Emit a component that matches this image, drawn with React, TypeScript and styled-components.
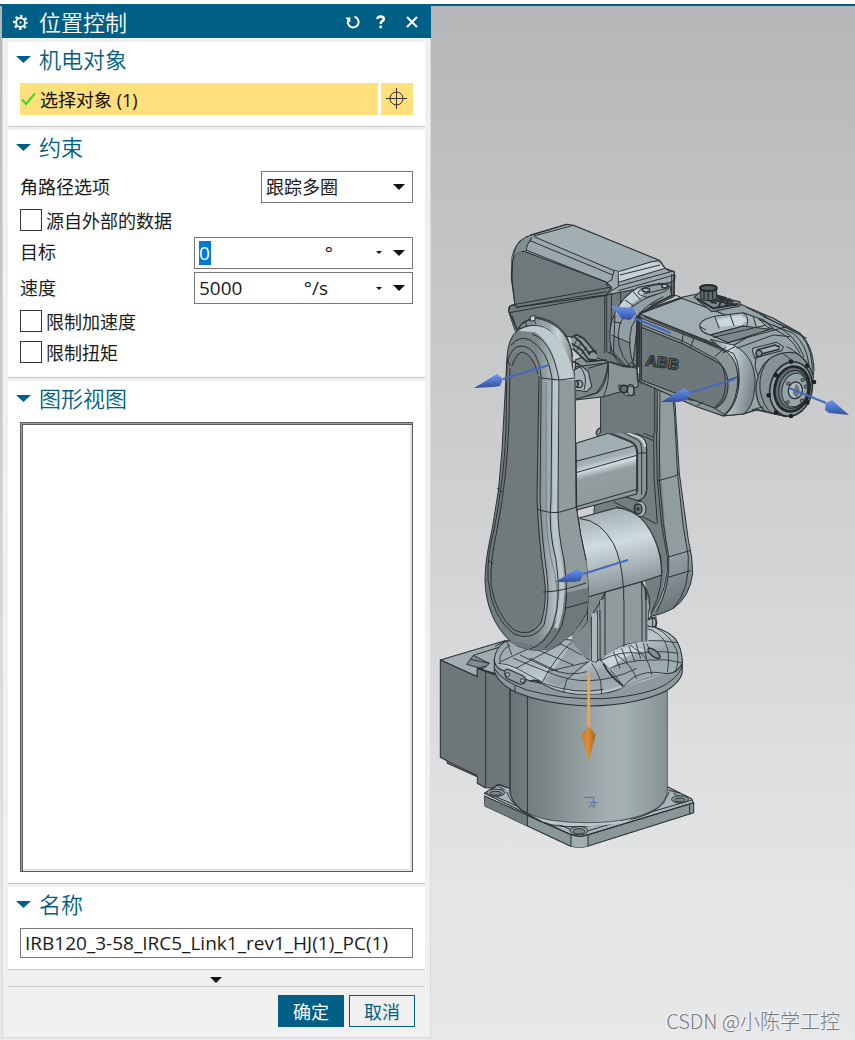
import React from "react";
import styled, { createGlobalStyle } from "styled-components";

const teal = "#005f87";
const ink = "#2b3032";
const uiFont = `"Open Sans", "Noto Sans CJK SC", sans-serif`;

const GlobalStyle = createGlobalStyle`
  * { box-sizing: border-box; }
  body { margin: 0; background: #e7e8ea; font-family: ${uiFont}; color: #1a1a1a; }
  button, input, select { font-family: inherit; color: inherit; border-radius: 0; }
`;

const Page = styled.div`
  min-height: 100vh;
  display: flex;
  flex-direction: column;
  background: #fff;
  padding-top: 4px;
`;

const Workspace = styled.div`
  flex: 1;
  display: flex;
  align-items: stretch;
  border-top: 2px solid ${teal};
  background: linear-gradient(#b5b6b8, #c1c2c4 20%, #cccdcf 42%, #dadbdd 67%, #e3e4e6 84%, #e7e8ea);
`;

const Dialog = styled.form`
  flex: none;
  width: 429px;
  margin: 0 0 2px 2px;
  display: flex;
  flex-direction: column;
  background: #f0f0f0;
  box-shadow: inset 0 0 0 1px #dadada;
`;

const TitleBar = styled.header`
  height: 32px;
  display: flex;
  align-items: center;
  gap: 11px;
  padding: 0 11px;
  background: ${teal};
  color: #fff;
`;

const Title = styled.h1`
  flex: 1;
  margin: 0;
  font-size: 22px;
  line-height: 32px;
  font-weight: 350;
`;

const TitleButton = styled.button`
  width: 16px;
  height: 16px;
  padding: 0;
  border: 0;
  background: none;
  color: #fff;
  svg { display: block; }
`;

const TitleActions = styled.div`
  display: flex;
  gap: 14px;
`;

const Sections = styled.div`
  display: flex;
  flex-direction: column;
  gap: 3px;
  padding: 4px 6px 0;
`;

const Panel = styled.section`
  background: #fff;
  border-bottom: 1px solid #c6c6c6;
  padding: 0 12px 11px;
`;

const PanelTitle = styled.h2`
  display: flex;
  align-items: center;
  gap: 8px;
  margin: 0 -4px;
  height: 34px;
  font-size: 22px;
  line-height: 34px;
  font-weight: 350;
  color: ${teal};
`;

const SelectRow = styled.div`
  display: flex;
  gap: 3px;
  height: 32px;
  margin-top: 7px;
`;

const SelectObject = styled.button`
  flex: 1;
  display: flex;
  align-items: center;
  gap: 4px;
  padding: 0 1px;
  border: 0;
  background: #ffe07a;
  font-size: 18px;
  color: #111;
`;

const PickButton = styled.button`
  width: 32px;
  padding: 0;
  display: grid;
  place-items: center;
  border: 0;
  background: #ffe07a;
`;

const Constraints = styled.div`
  padding-top: 2px;
`;

const Row = styled.div<{ $h: number }>`
  display: flex;
  align-items: center;
  justify-content: space-between;
  height: ${(p) => p.$h}px;
  font-size: 18px;
`;

const RowLabel = styled.label`
  padding-bottom: 3px;
`;

const CheckLabel = styled.label<{ $h: number }>`
  display: flex;
  align-items: center;
  gap: 4px;
  height: ${(p) => p.$h}px;
  font-size: 18px;
`;

const Check = styled.input`
  appearance: none;
  width: 22px;
  height: 22px;
  margin: 0;
  border: 1px solid #333;
  background: #fff;
`;

const Field = styled.div<{ $w: number }>`
  display: flex;
  align-items: center;
  width: ${(p) => p.$w}px;
  height: 32px;
  padding: 0 7px 0 4px;
  border: 1px solid #767676;
  background: #fff;
`;

const Picker = styled.select`
  appearance: none;
  flex: 1;
  min-width: 0;
  padding: 0;
  border: 0;
  background: none;
  font-size: 18px;
  outline: none;
`;

const NumberInput = styled.input<{ $w: number; $selected?: boolean }>`
  width: ${(p) => p.$w}px;
  height: 24px;
  padding: 0;
  border: 0;
  outline: 0;
  font-size: 19px;
  line-height: 24px;
  background: ${(p) => (p.$selected ? "#0078d7" : "none")};
  color: ${(p) => (p.$selected ? "#fff" : "inherit")};
`;

const Unit = styled.span<{ $gap: number }>`
  flex: 1;
  padding-right: ${(p) => p.$gap}px;
  text-align: right;
  font-size: 19px;
`;

const Arrows = styled.span`
  display: flex;
  align-items: center;
  gap: 11px;
`;

const GraphView = styled.div`
  height: 450px;
  margin-top: 7px;
  border: 1px solid #5c5c5c;
  box-shadow: inset 1px 1px #a0a0a0, inset 2px 2px #5c5c5c, inset -2px -2px #e3e3e3;
`;

const NameInput = styled.input`
  display: block;
  width: 100%;
  height: 30px;
  margin-top: 7px;
  padding: 0 4px;
  border: 1px solid #767676;
  font-size: 19px;
`;

const MoreButton = styled.button`
  display: grid;
  place-items: center;
  height: 17px;
  margin: 0 6px;
  padding: 3px 2px 0 0;
  border: 0;
  border-bottom: 1px solid #cfcfcf;
  background: none;
`;

const Footer = styled.footer`
  display: flex;
  justify-content: flex-end;
  gap: 5px;
  padding: 8px 16px 10px;
`;

const ActionButton = styled.button<{ $primary?: boolean }>`
  width: 66px;
  height: 32px;
  padding: 0;
  border: 1px solid ${teal};
  background: ${(p) => (p.$primary ? teal : "#f0f0f0")};
  color: ${(p) => (p.$primary ? "#fff" : teal)};
  font-size: 18px;
`;

const Viewport = styled.main`
  flex: 1;
  min-width: 0;
  display: flex;
  flex-direction: column;
  justify-content: space-between;
  padding-top: 194px;
`;

const Drawing = styled.svg`
  display: block;
  width: 100%;
  max-width: 640px;
`;

const Watermark = styled.p`
  margin: 0;
  padding: 0 15px 5px;
  text-align: right;
  font-family: "Noto Sans CJK SC", sans-serif;
  font-size: 20px;
  line-height: 28px;
  font-weight: 300;
  color: #77787a;
  text-shadow: -1px -1px #f6f6f6;
`;

const Triangle = ({ w = 12, h = 6, color = "#111" }: { w?: number; h?: number; color?: string }) => (
  <svg width={w} height={h} viewBox="0 0 12 6" preserveAspectRatio="none" aria-hidden="true">
    <path d="M0 0H12L6 6Z" fill={color} />
  </svg>
);

const SectionTitle = ({ children }: { children: React.ReactNode }) => (
  <PanelTitle>
    <Triangle w={15} h={7} color={teal} />
    {children}
  </PanelTitle>
);

const GearIcon = () => (
  <svg width="15" height="15" viewBox="0 0 16 16" fill="none" stroke="#fff" aria-hidden="true">
    <circle cx="8" cy="8" r="4.8" strokeWidth="2" />
    <circle cx="8" cy="8" r="6.8" strokeWidth="2.2" strokeDasharray="2.6 2.74" strokeDashoffset="1.3" />
    <circle cx="8" cy="8" r="1.1" fill="#fff" stroke="none" />
  </svg>
);

const Line = ({ d, w = 3 }: { d: string; w?: number }) => (
  <path d={d} fill="none" stroke={ink} strokeWidth={w} strokeLinejoin="round" />
);
const Face = ({ d, f, w = 3.2 }: { d: string; f: string; w?: number }) => (
  <path d={d} fill={f} stroke={ink} strokeWidth={w} strokeLinejoin="round" />
);

const Gradients = () => (
  <defs>
    <linearGradient id="drum">
      <stop offset="0" stopColor="#687376" />
      <stop offset=".25" stopColor="#7d898b" />
      <stop offset=".6" stopColor="#a1adaf" />
      <stop offset=".72" stopColor="#a5b2b4" />
      <stop offset="1" stopColor="#859193" />
    </linearGradient>
    <linearGradient id="dome" x2="1" y2="1">
      <stop offset="0" stopColor="#8d9a9d" />
      <stop offset=".35" stopColor="#a9b6b9" />
      <stop offset=".5" stopColor="#bdcacd" />
      <stop offset=".62" stopColor="#98a5a8" />
      <stop offset="1" stopColor="#aebbbe" />
    </linearGradient>
    <linearGradient id="shoulder" x1=".3" y1="0" x2=".5" y2="1">
      <stop offset="0" stopColor="#9eabad" />
      <stop offset=".4" stopColor="#cfdcdf" />
      <stop offset=".7" stopColor="#a5b1b4" />
      <stop offset="1" stopColor="#7b8789" />
    </linearGradient>
    <linearGradient id="tube" x1=".4" y1="0" x2=".6" y2="1">
      <stop offset="0" stopColor="#a2afb2" />
      <stop offset=".33" stopColor="#a2afb2" />
      <stop offset=".42" stopColor="#d0dde0" />
      <stop offset=".52" stopColor="#929ea0" />
      <stop offset="1" stopColor="#8b9799" />
    </linearGradient>
    <linearGradient id="legEdge">
      <stop offset="0" stopColor="#6f7a7c" />
      <stop offset=".5" stopColor="#7b8789" />
      <stop offset=".7" stopColor="#b6c4c7" />
      <stop offset=".8" stopColor="#8f9b9d" />
      <stop offset="1" stopColor="#8f9b9d" />
    </linearGradient>
    <linearGradient id="bulge">
      <stop offset="0" stopColor="#788486" />
      <stop offset=".55" stopColor="#9ba8aa" />
      <stop offset=".72" stopColor="#c9d7da" />
      <stop offset="1" stopColor="#7c888a" />
    </linearGradient>
    <linearGradient id="legFoot" x1="0" y1="0" x2=".3" y2="1">
      <stop offset="0" stopColor="#a0adaf" />
      <stop offset="1" stopColor="#69747a" />
    </linearGradient>
    <linearGradient id="nose" x1="0" y1=".2" x2="1" y2=".5">
      <stop offset="0" stopColor="#8b979a" />
      <stop offset=".4" stopColor="#cbd9dc" />
      <stop offset="1" stopColor="#79858a" />
    </linearGradient>
    <linearGradient id="cone" x1="0" y1="0" x2="0" y2="1">
      <stop offset="0" stopColor="#6f93e8" />
      <stop offset=".5" stopColor="#4f74cc" />
      <stop offset="1" stopColor="#33509a" />
    </linearGradient>
    <linearGradient id="orange">
      <stop offset="0" stopColor="#c47a2e" />
      <stop offset=".45" stopColor="#e08e35" />
      <stop offset="1" stopColor="#a4611e" />
    </linearGradient>
  </defs>
);

/* Rear link, cross tube, shoulder drum and pedestal column */
const RearLink = () => (
  <g transform="translate(470 400) scale(.333333)">
    <path d="M393-60V95L372 330 375 345 500 380 540 648 600 630 615 400 580 100 575-60Z" fill="#737e80" />
    <path d="M550 245V360L440 305 500 302 530 280V120L393 46V-60H560Z" fill="#737e80" />
    <Line d="M393-60V82M372 345V330L378 300" />
    <path d="M550-100L612-40 628 220 655 420Q668 470 668 520 660 590 610 625 580 642 540 650 595 560 590 450 562 240Z" fill="#909c9e" />
    <path d="M592 470L662 450Q668 480 668 520 660 590 610 625 580 642 540 650 585 600 592 530Z" fill="url(#legFoot)" />
    <Line d="M397 46L550 112M397 54L550 122M550-100L552 230 562 370M556-100L562 240 574 370 592 470 Q600 560 542 645M570-70L568 240 580 370 596 470Q602 560 560 635" />
    <Line d="M604-60L614 50 623 225 640 380 655 470Q660 570 610 625M612-40L628 220 655 420Q668 470 668 520 660 590 610 625 580 642 540 650M562 243L615 228 628 220M592 472L662 451M594 532L662 512M430 305L560 372M440 320Q540 350 572 470 585 560 545 635" />
    <Face d="M378 100Q380 78 420 78L505 108Q532 118 530 150V270Q528 295 505 302L470 292 400 130Z" f="#8a9698" />
    <path d="M418 80L505 110Q522 118 526 140" fill="none" stroke="#cbd8db" strokeWidth="7" />
    <Line d="M420 76L510 108Q532 118 530 150V270Q528 295 505 302M385 103Q400 88 420 98L480 122Q504 132 503 160V275M405 88Q425 80 440 88L500 118Q515 125 515 150V285M503 160L530 158" />
    <Face d="M318 130L415 100 480 125Q498 132 500 155V282L320 330Z" f="url(#tube)" />
    <Line d="M318 184L498 136M318 218L500 166M320 320L500 268" />
    <ellipse cx="510" cy="327" rx="18" ry="23" fill="#a5b2b5" stroke={ink} strokeWidth="3" />
    <ellipse cx="505" cy="327" rx="11" ry="15" fill="#6b7678" stroke={ink} strokeWidth="4" />
    <circle cx="504" cy="327" r="5" fill={ink} />
    <path d="M350 590L410 575 400 700 310 730 300 690Z" fill="#7d898b" />
    <Face d="M325 355L440 323Q500 330 530 375 575 440 575 525L515 545 350 592Z" f="url(#shoulder)" />
    <Line d="M330 356Q390 360 430 430 455 480 460 560M353 592L352 670" />
    <Face d="M385 780V640L405 577 515 545 530 580V780Z" f="#8f9b9d" />
    <path d="M405 577L360 670 310 715 360 780H385V640Z" fill="#7b8789" />
    <path d="M366 670Q385 640 392 600V790H366Z" fill="#b0bdbf" />
    <Line d="M405 577Q380 630 330 695M390 600V790M382 650V790M360 670V780M405 577V780M461 560V790M515 545V755M526 565V760M515 545Q550 590 535 640V680" />
    <circle cx="545" cy="668" r="15" fill="#a8b5b8" stroke={ink} strokeWidth="4" />
    <Line d="M535 660L558 650V685L538 690M548 655V682" />
  </g>
);

const Base = () => (
  <g transform="translate(430 600) scale(.333333)">
    <Face d="M31 180L225 122 280 130 260 240 170 213 142 205V230Z" f="#a1aeb1" />
    <Face d="M31 180L142 230V205L250 240V590L195 565 165 563 142 550V530L52 490V483L31 472Z" f="#6d777a" />
    <path d="M110 193L130 166 178 190 160 207Z" fill="#7f8b8d" />
    <Line d="M167 213V562M52 484L142 526M110 193L130 166 210 141M110 193L160 207 178 190 122 178M130 166L178 190M142 205L195 225M142 205L170 198M225 122L195 140" />
    <Face d="M163 580L205 555 240 565 712 560 785 596 791 612 475 704 450 710 425 706Z" f="#a9b6b9" />
    <Face d="M163 588L420 703Q450 715 475 704L791 608V638L475 738Q450 745 420 738L165 618Z" f="#8a9698" />
    <path d="M163 588L292 646V678L165 618Z" fill="#707b7d" />
    <path d="M423 706Q450 714 474 706V738Q450 745 423 738Z" fill="#a1aeb0" />
    <Line d="M163 588L420 703Q450 715 475 704L791 608M292 646V678M423 705V738M474 705V738M779 614V642M170 578L425 690 475 692 785 600" />
    {[[197, 578, 27, 11], [447, 692, 27, 13], [750, 598, 25, 11]].map(([x, y, rx, ry]) => (
      <g key={x}>
        <ellipse cx={x} cy={y} rx={rx} ry={ry} fill="#93a0a3" stroke={ink} strokeWidth="3" />
        <ellipse cx={x} cy={y + 2} rx={rx - 9} ry={ry - 5} fill="#7b8789" stroke={ink} strokeWidth="3" />
      </g>
    ))}
    <Line d="M180 570L205 552 232 563M205 560L225 570M715 570L750 580M730 580L745 588M230 575Q240 610 290 640 350 690 470 678 650 665 700 610L718 575" />
    <path d="M292 640Q340 667 470 670 560 668 610 655L580 668Q440 690 340 665Z" fill="#bac8cb" />
    <Face d="M240 240V580Q250 620 292 640 350 668 470 668 610 668 680 625 712 600 712 570V240Z" f="url(#drum)" w={2} />
    <Line d="M292 280V640M240 270V580Q250 620 300 645" />
    <Face d="M193 175V215Q205 250 255 275 340 312 480 318 620 315 710 272 757 240 757 212V180Z" f="#8d999c" />
    <Line d="M193 205Q210 240 290 270 400 300 520 296 660 285 712 250 757 220 757 190M255 258V275" />
    <Face d="M193 180Q195 145 225 125L290 110 425 120Q450 150 470 175L490 185 512 178Q545 145 600 130L650 120 650 78Q700 82 735 115 757 145 757 190 740 225 705 220 640 235 580 262 540 283 480 283 390 285 335 250L300 243 235 215Q195 210 193 180Z" f="url(#dome)" />
    <path d="M425 125Q400 180 330 250L390 255Q450 215 478 185Z" fill="#7e8a8d" opacity=".5" />
    <path d="M515 185Q560 145 610 140L650 150Q570 165 540 215Z" fill="#d5e2e5" opacity=".7" />
    <path d="M210 190Q300 220 350 250 430 290 520 276L580 260 705 218" fill="none" stroke="#d0dde0" strokeWidth="8" opacity=".5" />
    <Line d="M205 190Q230 190 260 205L335 245M212 185L330 130M258 205L395 130M335 250Q370 180 425 125M352 215L478 185M210 190Q205 155 240 135M230 120L245 165M250 175L350 215Q420 245 480 242 550 240 620 205M270 165L355 205Q420 232 470 215M340 250Q440 285 520 268M400 279L410 240Q440 210 475 185M515 283L512 242Q500 210 485 190M578 260Q560 225 510 180M620 236Q605 195 560 165M665 225Q660 190 640 165L600 135M512 182Q570 150 630 160 690 150 745 160M540 205Q590 180 660 180 710 175 755 188M580 262Q620 205 705 220M650 85Q685 95 705 125 722 160 712 215M655 122Q700 120 740 128M680 85Q720 105 740 150 750 185 735 217M650 130L668 170 688 172M550 155L570 205M575 145L592 190M596 137L615 185M618 130L632 175M640 128L650 175M300 175L385 215M325 150L430 195M370 120L455 165" w={2.6} />
    <Line d="M520 190Q535 225 580 258M335 250Q320 237 300 243" w={5} />
    <Face d="M225 212Q228 205 240 210L280 228Q290 235 286 245 280 255 268 252L230 235Q222 225 225 212Z" f="#909da0" />
    <circle cx="233" cy="224" r="6" fill="#aebbbe" stroke={ink} strokeWidth="3" />
    <circle cx="277" cy="242" r="6" fill="#aebbbe" stroke={ink} strokeWidth="3" />
    <ellipse cx="672" cy="160" rx="22" ry="9" transform="rotate(38 672 160)" fill="#84908f" stroke={ink} strokeWidth="4" />
    <path d="M425 122L470 70 484 40V180L470 175Q445 150 425 122Z" fill="#7d898b" />
    <path d="M484 40H498L510 60V178L495 186 480 180Z" fill="#abb8bb" />
    <path d="M510 0H653V125Q600 122 560 145L512 178Z" fill="#8f9b9d" />
    <Line d="M484 50V182M510 30V178L495 188M503 30V182M525 0V165M582 0V140M636 0V125M648 0V125" />
    <path d="M464 592H491V608M478 608H504M484 616H498M488 622H494M476 624L484 614" fill="none" stroke="#4368b5" strokeWidth="2.6" />
    <path d="M476 218V385" stroke="#ff9f43" strokeWidth="8" />
    <path d="M476 378L497 404 476 484 455 404Z" fill="url(#orange)" />
  </g>
);

/* Motor housing with the elbow flange behind the forearm */
const Housing = () => (
  <g transform="translate(430 200) scale(.333333)">
    <path d="M512 520H680V700H512Z" fill="#70797c" />
    <Line d="M512 560V700M674 560V700M682 560V700" />
    <Face d="M436 480L530 440 620 500 625 560 520 590 436 600Z" f="#879395" />
    <Face d="M436 500L535 488Q530 560 500 580L437 598Z" f="#7a8688" />
    <Face d="M236 330L240 318 530 250 735 225 730 290 625 340V500L580 500 490 470 420 410 260 392Z" f="#717b7e" />
    <Face d="M255 315L244 235 246 175Q252 130 290 110L410 73 430 76 690 182 705 205 733 215 730 245 530 285Z" f="#9ca9ac" />
    <Face d="M255 315L246 235 248 180Q254 155 282 154L528 246 545 262 530 284 260 322Z" f="#6f797c" />
    <path d="M430 76L690 182 665 185 560 213 312 110Z" fill="#a2afb2" />
    <path d="M562 214L680 183 704 205 565 245Z" fill="#c6d3d6" />
    <path d="M246 175Q252 130 290 112L310 112 285 152Q255 155 248 180Z" fill="#828e91" />
    <Line d="M312 110L552 212M300 122L548 225M288 150L528 246M312 108L430 76 690 182M306 112Q288 135 288 152M272 120Q250 145 250 180M552 212Q562 208 565 220V260L548 270 528 255Q530 245 545 240ZM565 215L665 185 690 182 705 205 565 247M570 225L690 195M566 258L730 213M565 272L733 225M410 73L300 105" />
    <Line d="M236 322L245 315 540 262M238 338L535 285 545 270M260 322L530 275M236 322V335L256 395M245 345L262 390M524 288V460M530 286V455M545 280L542 460M572 275V310M733 215V290M725 222V285M720 215L705 205M530 455L625 500" />
    <Face d="M545 450Q530 390 555 340 580 285 625 262L690 250 720 260 725 285 670 315 625 345 610 480 590 500Z" f="#93a0a3" />
    <path d="M556 340Q580 290 625 265L650 280Q590 320 575 350Z" fill="#c4d1d4" />
    <path d="M545 405L600 430 608 490 580 498Q545 470 545 405Z" fill="#687376" opacity=".6" />
    <Line d="M600 500Q550 440 570 370 595 310 680 282M612 498Q590 440 605 380 630 320 700 290M620 500V345M545 405L602 430M550 365L575 370M565 330L592 345M585 300L612 318M610 275L632 300M555 345L550 465Q570 500 600 503M545 460L580 490M625 275Q640 258 700 252L718 262Q715 275 650 292L632 285Q622 282 625 275ZM640 282L712 265" />
    <ellipse cx="648" cy="270" rx="11" ry="6" fill="#a7b4b7" stroke={ink} strokeWidth="4" />
    <ellipse cx="704" cy="258" rx="9" ry="6" fill="#a7b4b7" stroke={ink} strokeWidth="4" />
    <path d="M424 408L440 404 462 416 500 460 500 475 480 482 455 470 425 440Z" fill="#8e9b9e" />
    <Line d="M424 412L440 404 462 416 500 462M425 430L455 450 475 478 500 480M430 408Q455 425 480 465M428 445L470 485 530 480M475 458L498 452M420 480L450 495" w={5} />
    <Line d="M440 420L430 440M455 425L440 452M470 440L455 462" w={3} />
    <Face d="M432 510L455 498 475 515 485 560 470 575 435 570Z" f="#a7b4b7" />
    <Line d="M450 500Q475 530 462 570M475 505L530 488M534 488Q530 540 500 578L470 588M538 485L620 505M520 590Q540 550 535 490" />
    <circle cx="447" cy="552" r="11" fill="#9eabad" stroke={ink} strokeWidth="4" />
    <circle cx="436" cy="552" r="9" fill="#7d898b" stroke={ink} strokeWidth="4" />
    <path d="M566 555L610 560 615 585 590 588 568 570Z" fill="#93a0a3" stroke={ink} strokeWidth="3" />
    <circle cx="582" cy="567" r="11" fill="#697375" stroke={ink} strokeWidth="5" />
    <ellipse cx="602" cy="570" rx="10" ry="17" fill="none" stroke={ink} strokeWidth="4" />
  </g>
);

/* Front link: the long teardrop plate with its rounded rim */
const FrontLink = () => (
  <g>
    <g transform="translate(430 200) scale(.333333)">
      <path d="M265 385Q280 360 320 355 400 370 425 450L430 540 380 560 330 380Z" fill="url(#bulge)" stroke={ink} strokeWidth="3" />
      <Line d="M262 390L275 370 312 350Q370 355 405 400 420 425 428 470M285 362L290 378M310 355L318 372" />
      <path d="M300 350L314 346 316 360 302 364Z" fill="#cbd8db" stroke={ink} strokeWidth="3" />
    </g>
    <path
      d="M507 358Q508 338 517 331 532 320 549 330 560 340 566 355L575 380 576 505Q580 535 586 560 590 592 587 612 574 640 548 649 526 654 510 641 486 618 485 580 485 560 492 530 500 490 502 450Z"
      fill="url(#legEdge)" stroke={ink} strokeWidth="1"
    />
    <path d="M518 331Q535 321 550 331 568 345 575 380H560Q555 345 535 332Z" fill="#bdcbce" />
    <path d="M560 380H576V505Q580 535 586 560 590 592 586 610 572 640 548 649 560 630 564 600 566 570 560 540L558 510Z" fill="#8f9b9d" />
    <path d="M565 593L588 588Q590 600 586 612 574 640 548 649 526 654 510 641L535 645Q557 630 565 593Z" fill="#6e797b" />
    <path
      d="M510 365Q514 350 521 352 533 352 539 375L540 400 537 500Q540 540 544 575 548 600 541 623 530 641 512 631 492 610 490 580 489 560 495 530 505 480 506 430Z"
      fill="#70797c"
    />
    <path d="M546 382V500Q545 540 555 575 562 610 548 636" fill="none" stroke="#718082" />
    <path d="M555 382V500Q552 530 560 565 566 600 556 628" fill="none" stroke="#b9c7ca" strokeWidth="4" />
    <g fill="none" stroke={ink}>
      <path d="M512 366Q517 352 523 352 533 355 538 374M510 368L509 420Q507 480 497 530 490 560 491 585 496 615 514 630 530 638 541 623 548 600 544 575 539 545 537 500L539 376" />
      <path d="M507 362Q512 346 521 346 538 347 541 376V400L540 500Q542 540 547 575 550 600 544 625 533 642 514 634 492 618 488 580 487 555 494 530 504 480 506 430Z" />
      <path d="M511 345Q520 335 530 340 548 350 552 378L551 500Q548 530 556 560 562 600 553 625 545 645 530 649M559 380L558 500Q557 530 564 560 570 600 562 625 555 640 545 648M532 334Q552 340 559 380L575 378M575 380L576 505Q580 535 586 560M537 509Q550 514 560 512L577 507M543 592Q560 592 586 583M566 608L588 602M497 488L502 492M488 560L493 564M507 358L510 366M541 378L559 380" />
    </g>
  </g>
);

const Forearm = () => {
  const bolts = [[573, 425], [622, 437], [642, 486], [622, 548], [573, 588], [528, 578], [506, 526], [528, 466]];
  return (
    <g transform="translate(600 220) scale(.333333)">
      <Face d="M118 285L150 265 245 232 325 215 415 250 520 295 600 340Q640 380 642 450L630 530 560 590 470 570 430 582 370 588 120 485Z" f="#97a4a7" />
      <Face d="M118 282L245 235 340 270 480 330 385 385 330 365Z" f="#a1aeb1" />
      <Face d="M120 282L310 360 380 390Q420 420 412 500 405 560 370 588L290 560 120 485Z" f="#8a9698" />
      <Face d="M124 322L250 372 350 425Q385 445 384 500 382 545 345 565L124 480Z" f="#6e787b" />
      <path d="M330 358L400 375Q470 410 465 500 460 565 430 582L375 587Q415 550 416 490 415 420 380 395Z" fill="url(#nose)" stroke={ink} strokeWidth="3" />
      <Line d="M124 314L250 364 350 418Q378 438 376 500 375 540 345 560M118 292L320 370 375 395M112 290V480L125 492M124 290V480M250 342L245 370M283 350L272 382M345 410L378 380M405 380L368 400M415 470L384 480M290 558L310 545M130 290L400 400Q425 440 415 510M255 535L280 542M345 565L378 587M245 232L118 278M240 230L222 225 150 255" />
      <text x="136" y="436" fontFamily="Liberation Sans Narrow, Liberation Sans" fontSize="46" fontWeight="700" fill="#7f8b8e" stroke={ink} strokeWidth="4" transform="rotate(8 136 436)">ABB</text>
      <Face d="M300 312Q310 295 350 288L430 278 490 300 520 325 470 335 430 318 330 345Q295 335 300 312Z" f="#a9b6b9" />
      <path d="M345 300L420 285 440 300 425 315 360 320Z" fill="#ccd9dc" />
      <Face d="M332 345L430 318 510 328 385 368Z" f="#7d898b" />
      <Line d="M345 292L358 325M390 283L402 318M300 320L318 330M430 280Q450 290 440 318M460 290L470 325M480 300L500 320M385 368L560 320M340 352L500 315M490 290L600 340Q645 390 635 480M475 298L580 340Q620 375 626 430M500 320Q570 340 600 400M520 315Q585 340 612 410M410 385L520 345 570 350M480 280L500 290M440 262L620 355" />
      <Face d="M283 232L300 215 330 225 420 245V258L335 275Z" f="#7f8b8d" />
      <Line d="M290 235L340 265 415 252M310 235L350 250M335 250L345 225 380 235M350 235L400 245M355 262L370 230M375 260L390 235M340 240L410 255" w={6} />
      <Face d="M302 202V236Q325 248 350 236V202Z" f="#5f6a6c" />
      <ellipse cx="325" cy="204" rx="25" ry="9" fill="#53605f" stroke="#222729" strokeWidth="6" />
      <Line d="M312 212V238M325 213V240M338 212V238" w={4} />
      <Face d="M458 385L530 367 550 380 545 392 485 408 465 415 458 395Z" f="#a8b5b8" />
      <Line d="M470 390L525 375 540 382M485 402L540 387" w={5} />
      <circle cx="477" cy="400" r="9" fill="#8b979a" stroke={ink} strokeWidth="4" />
      <Face d="M468 500Q475 440 510 415 550 390 590 400 625 420 640 470L625 540 560 590 500 575Q468 560 468 500Z" f="#869295" />
      <Line d="M510 415Q475 450 480 510 490 560 515 580M470 400L465 440 475 470M548 400L575 420M455 570L490 560M430 582L470 568 500 575M560 380Q600 400 620 430" />
      <ellipse cx="573" cy="507" rx="63" ry="82" transform="rotate(12 573 507)" fill="#94a1a4" stroke={ink} strokeWidth="5" />
      <ellipse cx="576" cy="507" rx="52" ry="68" transform="rotate(12 576 507)" fill="#606b6d" stroke="#22282a" strokeWidth="8" />
      <ellipse cx="580" cy="508" rx="43" ry="57" transform="rotate(12 580 508)" fill="#77878b" stroke="#22282a" strokeWidth="3" />
      <ellipse cx="584" cy="510" rx="38" ry="51" transform="rotate(12 584 510)" fill="#98a5a8" stroke={ink} strokeWidth="3" />
      <ellipse cx="586" cy="511" rx="21" ry="25" transform="rotate(12 586 511)" fill="#b5c2c5" stroke={ink} strokeWidth="4" />
      <path d="M588 490Q610 510 590 534L578 520Z" fill="#6e797c" />
      {bolts.map(([x, y]) => <circle key={`${x}-${y}`} cx={x} cy={y} r="7" fill="#1d2224" />)}
      {[[565, 491], [608, 480], [563, 547], [606, 542], [618, 500]].map(([x, y]) => (
        <circle key={`${x}-${y}`} cx={x} cy={y} r="5" fill="#7e8a8d" stroke={ink} strokeWidth="3" />
      ))}
    </g>
  );
};

const axes = [
  { line: "M671 333L634 318", cone: "M611 306L633 308 636 314 630 320 622 319Z" },
  { line: "M549 365L503 379", cone: "M474 388L497 374 503 379 500 386 493 387Z" },
  { line: "M735 379L689 393", cone: "M661 402L684 388 690 393 686 400 679 402Z" },
  { line: "M789 388L826 403", cone: "M849 415L832 400 826 403 825 410 829 413Z" },
  { line: "M628 560L583 574", cone: "M555 582L577 569 584 573 580 581 573 582Z" },
];

const RobotArm = () => (
  <Drawing viewBox="431 200 424 660" role="img" aria-label="IRB120">
    <Gradients />
    <RearLink />
    <Base />
    <Housing />
    <FrontLink />
    <Forearm />
    {axes.map((a) => (
      <g key={a.line}>
        <path d={a.line} stroke="#4469bd" strokeWidth="2" />
        <path d={a.cone} fill="url(#cone)" />
      </g>
    ))}
  </Drawing>
);

export default function App() {
  return (
    <Page>
      <GlobalStyle />
      <Workspace>
        <Dialog onSubmit={(e) => e.preventDefault()}>
          <TitleBar>
            <GearIcon />
            <Title>位置控制</Title>
            <TitleActions>
              <TitleButton type="button" aria-label="重置">
                <svg width="16" height="16" viewBox="0 0 16 16" fill="none" stroke="#fff" strokeWidth="2">
                  <path d="M10.5 2.8A5.4 5.4 0 1 1 5 4.6" />
                  <path d="M2 4.2H5.6V8" strokeWidth="1.5" />
                </svg>
              </TitleButton>
              <TitleButton type="button" aria-label="帮助">
                <svg width="16" height="16" viewBox="0 0 16 16" fill="none" stroke="#fff" strokeWidth="2.6">
                  <path d="M3.5 5Q3.5 2.6 6.5 2.6 9.8 2.6 9.8 5 9.8 6.4 8 7.4 6.7 8.2 6.7 10" />
                  <path d="M6.7 11.6V14.2" />
                </svg>
              </TitleButton>
              <TitleButton type="button" aria-label="关闭">
                <svg width="16" height="16" viewBox="0 0 16 16" fill="none" stroke="#fff" strokeWidth="2">
                  <path d="M3 3L13 13M13 3L3 13" />
                </svg>
              </TitleButton>
            </TitleActions>
          </TitleBar>

          <Sections>
            <Panel>
              <SectionTitle>机电对象</SectionTitle>
              <SelectRow>
                <SelectObject type="button">
                  <svg width="15" height="14" viewBox="0 0 15 14" fill="none" stroke="#2fe02f" strokeWidth="2">
                    <path d="M1 7.5L5 12 14 1.5" />
                  </svg>
                  选择对象 (1)
                </SelectObject>
                <PickButton type="button" aria-label="指定点">
                  <svg width="22" height="22" viewBox="0 0 22 22" fill="none" stroke="#333">
                    <circle cx="10.5" cy="10.5" r="6.5" />
                    <path d="M10.5 0V21M0 10.5H21" />
                  </svg>
                </PickButton>
              </SelectRow>
            </Panel>

            <Panel>
              <SectionTitle>约束</SectionTitle>
              <Constraints>
                <Row $h={42}>
                  <RowLabel htmlFor="path">角路径选项</RowLabel>
                  <Field $w={152}>
                    <Picker id="path"><option>跟踪多圈</option></Picker>
                    <Triangle />
                  </Field>
                </Row>
                <CheckLabel $h={24}><Check type="checkbox" />源自外部的数据</CheckLabel>
                <Row $h={41}>
                  <RowLabel htmlFor="target">目标</RowLabel>
                  <Field $w={219}>
                    <NumberInput id="target" $w={12} $selected defaultValue="0" />
                    <Unit $gap={43}>°</Unit>
                    <Arrows><Triangle w={6} h={3} /><Triangle /></Arrows>
                  </Field>
                </Row>
                <Row $h={30}>
                  <RowLabel htmlFor="speed">速度</RowLabel>
                  <Field $w={219}>
                    <NumberInput id="speed" $w={60} defaultValue="5000" />
                    <Unit $gap={48}>°/s</Unit>
                    <Arrows><Triangle w={6} h={3} /><Triangle /></Arrows>
                  </Field>
                </Row>
                <CheckLabel $h={35}><Check type="checkbox" />限制加速度</CheckLabel>
                <CheckLabel $h={28}><Check type="checkbox" />限制扭矩</CheckLabel>
              </Constraints>
            </Panel>

            <Panel>
              <SectionTitle>图形视图</SectionTitle>
              <GraphView />
            </Panel>

            <Panel>
              <SectionTitle>名称</SectionTitle>
              <NameInput aria-label="名称" defaultValue="IRB120_3-58_IRC5_Link1_rev1_HJ(1)_PC(1)" />
            </Panel>
          </Sections>

          <MoreButton type="button" aria-label="更多"><Triangle /></MoreButton>
          <Footer>
            <ActionButton type="submit" $primary>确定</ActionButton>
            <ActionButton type="button">取消</ActionButton>
          </Footer>
        </Dialog>

        <Viewport>
          <RobotArm />
          <Watermark>CSDN @小陈学工控</Watermark>
        </Viewport>
      </Workspace>
    </Page>
  );
}
